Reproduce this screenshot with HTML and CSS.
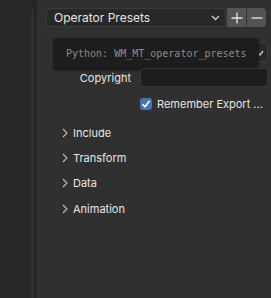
FILE: index.html
```html
<!DOCTYPE html>
<html lang="en">
<head>
	<meta charset="UTF-8">
	<title>Export Options</title>
	<link rel="stylesheet" href="styles.css">
</head>
<body>
	<div class="side"></div>
	<div class="divider"><div class="bar"></div></div>
	<div class="panel">
		<div class="presets">
			<div class="menu">
				<span>Operator Presets</span>
				<svg class="chev" width="9" height="6" viewBox="0 0 9 6"><path d="M1 1 L4.5 4.5 L8 1" fill="none" stroke="#cfcfcf" stroke-width="1.3"/></svg>
			</div>
			<div class="btn"><svg width="12" height="12" viewBox="0 0 12 12"><path d="M6 0.5 V11.5 M0.5 6 H11.5" stroke="#e6e6e6" stroke-width="1.3"/></svg></div>
			<div class="btn"><svg width="12" height="12" viewBox="0 0 12 12"><path d="M0.5 6 H11.5" stroke="#e6e6e6" stroke-width="1.3"/></svg></div>
		</div>

		<div class="prop">
			<div class="label"></div>
			<div class="field hidden-field">
				<svg width="7" height="6" viewBox="0 0 7 6"><path d="M1 3 L3 5 L6 1" fill="none" stroke="#cfcfcf" stroke-width="1.3"/></svg>
			</div>
			<div class="tooltip">Python: WM_MT_operator_presets</div>
		</div>

		<div class="prop">
			<div class="label">Copyright</div>
			<div class="field"></div>
		</div>

		<div class="prop">
			<div class="label"></div>
			<div class="check">
				<span class="box"><svg width="10" height="10" viewBox="0 0 10 10"><path d="M1.5 5.2 L4 7.8 L8.6 1.8" fill="none" stroke="#fff" stroke-width="1.6"/></svg></span>
				<span>Remember Export ...</span>
			</div>
		</div>

		<div class="tree">
			<div class="item"><svg width="6" height="10" viewBox="0 0 6 10"><path d="M1 1 L5 5 L1 9" fill="none" stroke="#bdbdbd" stroke-width="1.1"/></svg>Include</div>
			<div class="item"><svg width="6" height="10" viewBox="0 0 6 10"><path d="M1 1 L5 5 L1 9" fill="none" stroke="#bdbdbd" stroke-width="1.1"/></svg>Transform</div>
			<div class="item"><svg width="6" height="10" viewBox="0 0 6 10"><path d="M1 1 L5 5 L1 9" fill="none" stroke="#bdbdbd" stroke-width="1.1"/></svg>Data</div>
			<div class="item"><svg width="6" height="10" viewBox="0 0 6 10"><path d="M1 1 L5 5 L1 9" fill="none" stroke="#bdbdbd" stroke-width="1.1"/></svg>Animation</div>
		</div>
	</div>
</body>
</html>
```

FILE: styles.css
```css
*{margin: 0;padding: 0;box-sizing: border-box;}
html,body{width: 100%;height: 100%;}
body{
	display: flex;
	background: #282828;
	font-family: Inter, "DejaVu Sans", sans-serif;
	font-size: 11px;
	color: #e6e6e6;
	overflow: hidden;
	white-space: nowrap;
}
.side{width: 31px;background: #282828;}
.divider{
	width: 6px;
	background: #252525;
	padding-top: 9px;
}
.divider .bar{
	width: 3px;
	height: 100%;
	background: #2f2f2f;
	border-radius: 2px 2px 0 0;
}
.panel{
	flex: 1;
	background: #303030;
	padding: 8px 3px 0 9px;
}
.presets{
	display: flex;
	height: 19px;
	gap: 1px;
	margin-right: 2px;
	font-size: 12px;
}
.menu{
	flex: 1;
	display: flex;
	align-items: center;
	justify-content: space-between;
	padding: 0 5px 0 7px;
	background: #282828;
	border: 1px solid #3c3c3c;
	border-radius: 4px;
}
.btn{
	width: 19px;
	display: flex;
	align-items: center;
	justify-content: center;
	background: #545454;
}
.btn:last-child{border-radius: 0 4px 4px 0;}
.prop{
	position: relative;
	display: flex;
	align-items: center;
	height: 19px;
	margin-top: 6px;
}
.prop:nth-child(2){margin-top: 16px;}
.label{
	width: 94px;
	text-align: right;
	padding-right: 9px;
}
.field{
	flex: 1;
	height: 19px;
	background: #1d1d1d;
	border: 1px solid #353535;
	border-radius: 4px;
}
.hidden-field{
	display: flex;
	align-items: center;
	justify-content: flex-end;
	padding-right: 3px;
	background: #282828;
	border-color: #3c3c3c;
}
.tooltip{
	position: absolute;
	left: 7px;
	top: -5px;
	width: 206px;
	height: 32px;
	padding: 10px 0 0 13px;
	background: #1d1d1d;
	border-radius: 4px;
	font-family: "DejaVu Sans Mono", monospace;
	font-size: 10px;
	color: #8a8a8a;
	box-shadow: 0 1px 2px rgba(0,0,0,0.3);
}
.prop:nth-child(4){margin-top: 7px;}
.check{
	display: flex;
	align-items: center;
	gap: 5px;
}
.box{
	width: 12px;
	height: 12px;
	display: flex;
	align-items: center;
	justify-content: center;
	background: #4772b3;
	border-radius: 3px;
}
.tree{margin-top: 7px;padding-left: 16px;}
.item{
	display: flex;
	align-items: center;
	gap: 5px;
	height: 25.3px;
}
```
